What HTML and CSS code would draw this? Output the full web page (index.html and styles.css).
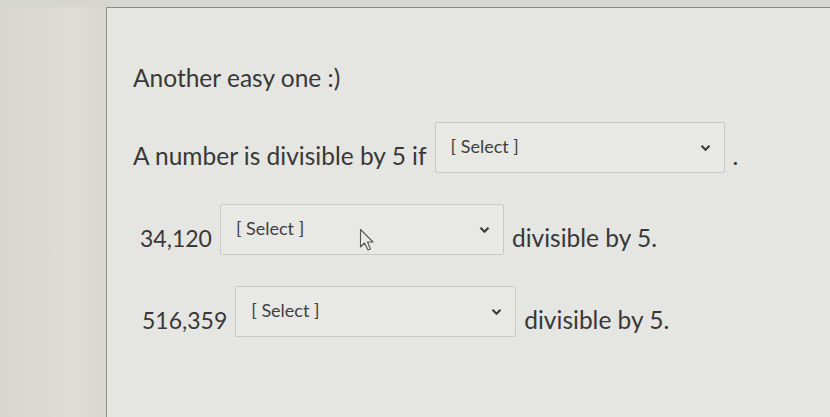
FILE: index.html
```html
<!DOCTYPE html>
<html lang="en">
<head>
<meta charset="utf-8">
<title>Quiz question</title>
<link rel="stylesheet" href="styles.css">
</head>
<body>
<div class="topstrip"></div>
<div class="page">
  <div class="side"></div>
  <main class="panel">
    <p class="heading">Another easy one :)</p>
    <div class="row row-1">
      <span class="txt">A number is divisible by 5 if</span>
      <div class="select sel-1"><span class="ph">[ Select ]</span>
        <svg class="chev" width="11" height="8" viewBox="0 0 11 8"><path d="M1.5 1.8 L5.5 5.8 L9.5 1.8" fill="none" stroke="#3c3c3c" stroke-width="2.2"/></svg>
      </div>
      <span class="txt">.</span>
    </div>
    <div class="row row-2">
      <span class="txt num">34,120</span>
      <div class="select sel-2"><span class="ph">[ Select ]</span>
        <svg class="chev" width="11" height="8" viewBox="0 0 11 8"><path d="M1.5 1.8 L5.5 5.8 L9.5 1.8" fill="none" stroke="#3c3c3c" stroke-width="2.2"/></svg>
        <svg class="cursor" width="18" height="24" viewBox="0 0 18 24"><path d="M1.5 1.5 L1.5 19 L5.5 15 L9 22 L11.5 21 L8.5 14 L14 14 Z" fill="#e9e9e6" stroke="#555" stroke-width="1.1" stroke-linejoin="round"/></svg>
      </div>
      <span class="txt">divisible by 5.</span>
    </div>
    <div class="row row-3">
      <span class="txt num">516,359</span>
      <div class="select sel-3"><span class="ph">[ Select ]</span>
        <svg class="chev" width="11" height="8" viewBox="0 0 11 8"><path d="M1.5 1.8 L5.5 5.8 L9.5 1.8" fill="none" stroke="#3c3c3c" stroke-width="2.2"/></svg>
      </div>
      <span class="txt">divisible by 5.</span>
    </div>
  </main>
</div>
</body>
</html>
```
FILE: styles.css
```css
html, body {
  margin: 0;
  padding: 0;
  height: 100%;
  overflow: hidden;
}
body {
  background: #d7d5cf;
  font-family: Lato, "Open Sans", sans-serif;
  color: #383838;
  position: relative;
}
.topstrip {
  height: 7px;
  margin-left: 104px;
  background: #d6d6d3;
}
.page {
  display: flex;
  height: 410px;
}
.side {
  width: 106px;
  flex: none;
  background: linear-gradient(90deg, #d9d6cf 0%, #dedcd6 70%, #d8d7d2 100%);
}
.panel {
  flex: 1;
  background: #e5e5e2;
  border-left: 1px solid #8f8f8c;
  border-top: 1px solid #8a8a87;
  padding: 56px 0 0 26px;
}
.heading {
  margin: 0 0 30px 0;
  font-size: 24.5px;
  line-height: 28px;
}
.row {
  display: flex;
  align-items: flex-end;
  gap: 8px;
  margin-bottom: 31px;
}
.row-2 { margin-left: 7px; }
.row-3 { margin-left: 9px; }
.txt {
  font-size: 24.5px;
  line-height: 28px;
  padding-bottom: 3px;
  white-space: nowrap;
}
.num {
  font-size: 23px;
}
.select {
  position: relative;
  height: 49px;
  border: 1px solid #c9c9c6;
  border-radius: 2px;
  background: #e8e8e5;
  box-sizing: content-box;
  display: flex;
  align-items: flex-start;
  justify-content: space-between;
  padding: 0 13px 0 15px;
}
.sel-1 { width: 260px; }
.sel-2 { width: 254px; }
.sel-3 { width: 251px; }
.ph {
  font-size: 18px;
  line-height: 20px;
  margin-top: 13px;
  color: #404040;
}
.chev {
  margin-top: 21px;
}
.cursor {
  position: absolute;
  left: 138px;
  top: 23px;
}
```
